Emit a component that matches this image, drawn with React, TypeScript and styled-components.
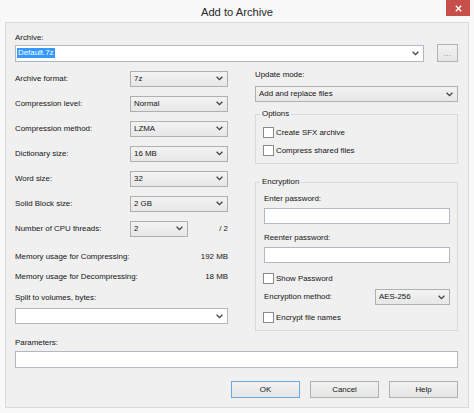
import React from "react";
import styled, { createGlobalStyle } from "styled-components";

const Global = createGlobalStyle`
  html, body { margin: 0; padding: 0; background: #f8f8f8; }
  body {
    font-family: "Liberation Sans", Arial, sans-serif;
    font-size: 7.9px;
    color: #141414;
  }
  * { box-sizing: border-box; }
`;

const Window = styled.div`
  width: 474px;
  height: 413px;
  display: flex;
  flex-direction: column;
  background: #f8f8f8;
`;

const TitleBar = styled.div`
  height: 22px;
  display: grid;
  grid-template-columns: 1fr auto 1fr;
  align-items: start;
`;

const Title = styled.div`
  grid-column: 2;
  font-size: 11.2px;
  line-height: 22px;
  padding-top: 1px;
  color: #2a2a2a;
`;

const CloseButton = styled.div`
  grid-column: 3;
  justify-self: end;
  margin-right: 4px;
  width: 24px;
  height: 16px;
  background: #c8504a;
  display: flex;
  align-items: center;
  justify-content: center;
`;

const Client = styled.div`
  margin-left: 5px;
  width: 464px;
  height: 386px;
  border: 1px solid #dadada;
  background: #f0f0f0;
  padding: 9px 10px 0 9px;
  display: flex;
  flex-direction: column;
`;

const Label = styled.div`
  line-height: 12px;
  height: 12px;
  white-space: nowrap;
`;

const ArchiveRow = styled.div`
  display: flex;
  align-items: center;
  height: 18px;
`;

const Combo = styled.div<{ $editable?: boolean; $width?: string; $height?: number }>`
  display: flex;
  align-items: center;
  width: ${(p) => p.$width ?? "100%"};
  height: ${(p) => p.$height ?? 16}px;
  padding: 0 4px 0 3px;
  border: 1px solid ${(p) => (p.$editable ? "#b2b8c0" : "#b0b0b0")};
  background: ${(p) => (p.$editable ? "#ffffff" : "linear-gradient(#f3f3f3, #e7e7e7)")};
  flex: none;
`;

const ComboText = styled.span`
  flex: 1;
  white-space: nowrap;
  line-height: 12px;
`;

const Selected = styled.span`
  background: #3399ff;
  color: #fff;
  padding: 0 1px;
  margin-left: -2px;
  line-height: 10px;
  display: inline-block;
`;

const BrowseButton = styled.div`
  margin-left: 13px;
  width: 21px;
  height: 18px;
  border: 1px solid #b3b3b3;
  background: linear-gradient(#f2f2f2, #e5e5e5);
  display: flex;
  align-items: center;
  justify-content: center;
  color: #6a6a6a;
  font-size: 7px;
  letter-spacing: 0.5px;
`;

const MainGrid = styled.div`
  margin-top: 4px;
  display: grid;
  grid-template-columns: 213px 203px;
  column-gap: 27px;
`;

const LeftColumn = styled.div`
  display: flex;
  flex-direction: column;
`;

const FieldRow = styled.div`
  height: 25px;
  display: grid;
  grid-template-columns: 115px 1fr;
  align-items: center;
`;

const ThreadsCell = styled.div`
  display: flex;
  align-items: center;
  justify-content: space-between;
`;

const InfoRow = styled.div<{ $first?: boolean }>`
  height: 20px;
  margin-top: ${(p) => (p.$first ? 5 : 0)}px;
  display: flex;
  align-items: center;
  justify-content: space-between;
`;

const Spaced = styled.div<{ $top: number }>`
  margin-top: ${(p) => p.$top}px;
`;

const RightColumn = styled.div`
  display: flex;
  flex-direction: column;
  padding-top: 3px;
`;

const Group = styled.fieldset<{ $top: number }>`
  margin: ${(p) => p.$top}px 0 0 0;
  padding: 0 7px 6px 8px;
  border: 1px solid #d9d9d9;
  min-width: 0;
  display: flex;
  flex-direction: column;
`;

const Legend = styled.legend`
  margin-left: -4px;
  padding: 0 2px;
  line-height: 12px;
`;

const CheckRow = styled.div<{ $top: number }>`
  margin-top: ${(p) => p.$top}px;
  height: 14px;
  display: flex;
  align-items: center;
  gap: 2px;
  margin-left: -1px;
  white-space: nowrap;
`;

const Box = styled.span`
  width: 11px;
  height: 11px;
  border: 1px solid #8b8b8b;
  background: #fff;
  flex: none;
`;

const TextInput = styled.div<{ $top: number; $height?: number }>`
  margin-top: ${(p) => p.$top}px;
  height: ${(p) => p.$height ?? 16}px;
  border: 1px solid #b2b8c0;
  background: #fff;
`;

const MethodRow = styled.div`
  margin-top: 4px;
  height: 16px;
  display: flex;
  align-items: center;
  justify-content: space-between;
`;

const ButtonRow = styled.div`
  margin-top: 13px;
  display: flex;
  justify-content: flex-end;
  gap: 10px;
`;

const Button = styled.div<{ $default?: boolean }>`
  width: 69px;
  height: 17px;
  border: 1px solid ${(p) => (p.$default ? "#6aaae0" : "#b0b0b0")};
  background: linear-gradient(#f2f2f2, #e5e5e5);
  display: flex;
  align-items: center;
  justify-content: center;
  line-height: 12px;
`;

const Chevron = () => (
  <svg width="7" height="5" viewBox="0 0 7 5">
    <path d="M0.6 0.8 L3.5 3.7 L6.4 0.8" fill="none" stroke="#404040" strokeWidth="1.3" />
  </svg>
);

const CloseGlyph = () => (
  <svg width="7" height="7" viewBox="0 0 7 7">
    <path d="M0.8 0.8 L6.2 6.2 M6.2 0.8 L0.8 6.2" stroke="#fff" strokeWidth="1.4" />
  </svg>
);

type SelectProps = {
  value?: string;
  editable?: boolean;
  width?: string;
  height?: number;
  children?: React.ReactNode;
};

const Select = ({ value, editable, width, height, children }: SelectProps) => (
  <Combo $editable={editable} $width={width} $height={height}>
    <ComboText>{children ?? value}</ComboText>
    <Chevron />
  </Combo>
);

const leftFields: { label: string; value: string }[] = [
  { label: "Archive format:", value: "7z" },
  { label: "Compression level:", value: "Normal" },
  { label: "Compression method:", value: "LZMA" },
  { label: "Dictionary size:", value: "16 MB" },
  { label: "Word size:", value: "32" },
  { label: "Solid Block size:", value: "2 GB" },
];

export default function App() {
  return (
    <>
      <Global />
      <Window>
        <TitleBar>
          <Title>Add to Archive</Title>
          <CloseButton>
            <CloseGlyph />
          </CloseButton>
        </TitleBar>
        <Client>
          <Label>Archive:</Label>
          <ArchiveRow>
            <Select editable width="409px" height={17}>
              <Selected>Default.7z</Selected>
            </Select>
            <BrowseButton>...</BrowseButton>
          </ArchiveRow>

          <MainGrid>
            <LeftColumn>
              {leftFields.map((f) => (
                <FieldRow key={f.label}>
                  <Label>{f.label}</Label>
                  <Select value={f.value} />
                </FieldRow>
              ))}
              <FieldRow>
                <Label>Number of CPU threads:</Label>
                <ThreadsCell>
                  <Select value="2" width="58px" />
                  <span>/ 2</span>
                </ThreadsCell>
              </FieldRow>
              <InfoRow $first>
                <span>Memory usage for Compressing:</span>
                <span>192 MB</span>
              </InfoRow>
              <InfoRow>
                <span>Memory usage for Decompressing:</span>
                <span>18 MB</span>
              </InfoRow>
              <Spaced $top={6}>
                <Label>Split to volumes, bytes:</Label>
              </Spaced>
              <Spaced $top={4}>
                <Select editable value="" />
              </Spaced>
            </LeftColumn>

            <RightColumn>
              <Label>Update mode:</Label>
              <Spaced $top={5}>
                <Select value="Add and replace files" />
              </Spaced>

              <Group $top={6}>
                <Legend>Options</Legend>
                <CheckRow $top={5}>
                  <Box />
                  <span>Create SFX archive</span>
                </CheckRow>
                <CheckRow $top={4}>
                  <Box />
                  <span>Compress shared files</span>
                </CheckRow>
              </Group>

              <Group $top={12}>
                <Legend>Encryption</Legend>
                <Spaced $top={5}>
                  <Label>Enter password:</Label>
                </Spaced>
                <TextInput $top={3} />
                <Spaced $top={8}>
                  <Label>Reenter password:</Label>
                </Spaced>
                <TextInput $top={3} />
                <CheckRow $top={8}>
                  <Box />
                  <span>Show Password</span>
                </CheckRow>
                <MethodRow>
                  <Label>Encryption method:</Label>
                  <Select value="AES-256" width="75px" />
                </MethodRow>
                <CheckRow $top={5}>
                  <Box />
                  <span>Encrypt file names</span>
                </CheckRow>
              </Group>
            </RightColumn>
          </MainGrid>

          <Spaced $top={6}>
            <Label>Parameters:</Label>
          </Spaced>
          <TextInput $top={2} $height={17} />

          <ButtonRow>
            <Button $default>OK</Button>
            <Button>Cancel</Button>
            <Button>Help</Button>
          </ButtonRow>
        </Client>
      </Window>
    </>
  );
}
